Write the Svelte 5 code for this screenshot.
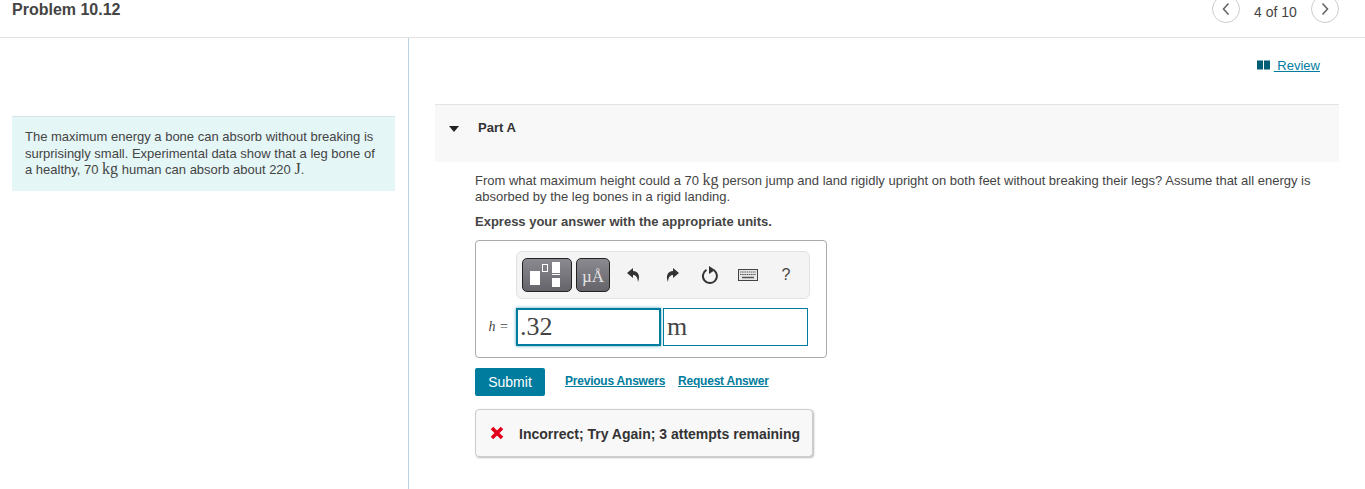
<script>
  let answer = '.32'
  let unit = 'm'
</script>

<div class="page">
  <header class="top">
    <h1>Problem 10.12</h1>
    <nav class="pager">
      <button class="round" aria-label="Previous">
        <svg width="10" height="14" viewBox="0 0 10 14"><path d="M7.5 1.5 2.5 7l5 5.500" fill="none" stroke="#666" stroke-width="1.600"/></svg>
      </button>
      <span class="count">4 of 10</span>
      <button class="round" aria-label="Next">
        <svg width="10" height="14" viewBox="0 0 10 14"><path d="M2.5 1.5 7.5 7l-5 5.500" fill="none" stroke="#666" stroke-width="1.600"/></svg>
      </button>
    </nav>
  </header>

  <div class="main">
    <aside class="side">
      <div class="intro">
        The maximum energy a bone can absorb without breaking is surprisingly small. Experimental data show that a leg bone of a healthy, 70 <span class="math">kg</span> human can absorb about 220 <span class="math">J</span>.
      </div>
    </aside>

    <section class="content">
      <div class="review-row">
        <a href="#review" class="review">
          <svg width="13" height="10" viewBox="0 0 13 10"><path d="M0 .5h6v9H0zM7 .5h6v9H7z" fill="#005f75"/></svg>
          <span>&nbsp;Review</span>
        </a>
      </div>

      <div class="part-head">
        <svg class="caret" width="10" height="6" viewBox="0 0 10 6"><path d="M0 0h10L5 6z" fill="#222"/></svg>
        <strong>Part A</strong>
      </div>

      <div class="part-body">
        <p class="question">From what maximum height could a 70 <span class="math">kg</span> person jump and land rigidly upright on both feet without breaking their legs? Assume that all energy is absorbed by the leg bones in a rigid landing.</p>
        <p class="express">Express your answer with the appropriate units.</p>

        <div class="answer-box">
          <div class="toolbar">
            <button class="tool wide" aria-label="Templates">
              <svg width="48" height="32" viewBox="0 0 48 32">
                <rect x="7" y="12" width="10" height="14" fill="#fff"/>
                <rect x="19.500" y="5.500" width="5" height="7" fill="none" stroke="#fff"/>
                <rect x="29" y="3" width="8" height="11" fill="#fff"/>
                <rect x="29" y="15" width="8" height="1" fill="#fff"/>
                <rect x="29" y="19" width="8" height="9" fill="#fff"/>
              </svg>
            </button>
            <button class="tool units">µÅ</button>
            <button class="icon first" aria-label="Undo">
              <svg width="16" height="16" viewBox="0 0 16 16"><path d="M7 1 1 6l6 5V8c3 0 4.500 2 5 7 2.500-6 .5-10.500-5-11z" fill="#333"/></svg>
            </button>
            <button class="icon" aria-label="Redo">
              <svg width="16" height="16" viewBox="0 0 16 16"><path d="M9 1l6 5-6 5V8c-3 0-4.500 2-5 7C1.500 9 3.500 4.500 9 4z" fill="#333"/></svg>
            </button>
            <button class="icon" aria-label="Reset">
              <svg width="18" height="18" viewBox="0 0 18 18"><path d="M5.500 3.900A7 7 0 1 0 13 4.300" fill="none" stroke="#333" stroke-width="2"/><path d="M8 0v8L14 4z" fill="#333"/></svg>
            </button>
            <button class="icon" aria-label="Keyboard">
              <svg width="20" height="12" viewBox="0 0 20 12">
                <rect x=".5" y=".5" width="19" height="11" fill="#e8e8e8" stroke="#444"/>
                <path d="M2 3h16M2 5.500h16" stroke="#555" stroke-width="1.200" stroke-dasharray="1.500 .7"/>
                <path d="M4 8.500h12" stroke="#555" stroke-width="1.500"/>
              </svg>
            </button>
            <button class="icon help" aria-label="Help">?</button>
          </div>

          <div class="inputs">
            <span class="label"><i>h</i> =</span>
            <input class="field focused" bind:value={answer} aria-label="Value" />
            <input class="field" bind:value={unit} aria-label="Units" />
          </div>
        </div>

        <div class="actions">
          <button class="submit">Submit</button>
          <a href="#prev" class="link">Previous Answers</a>
          <a href="#req" class="link">Request Answer</a>
        </div>

        <div class="feedback">
          <svg width="14" height="14" viewBox="0 0 14 14"><path d="M2 2l10 10M12 2 2 12" stroke="#e2001a" stroke-width="3.600"/></svg>
          <span>Incorrect; Try Again; 3 attempts remaining</span>
        </div>
      </div>
    </section>
  </div>
</div>

<style>
  :global(body) { margin: 0; background: #fff; }

  .page {
    font-family: "Liberation Sans", Arial, sans-serif;
    font-size: 13px; color: #444; height: 489px; overflow: hidden;
  }

  .top {
    height: 37px; border-bottom: 1px solid #e0e0e0;
    display: flex; justify-content: space-between; align-items: flex-start;
  }
  .top h1 { margin: 1px 0 0 12px; font-size: 16px; font-weight: 700; color: #444; line-height: 18px; }

  .pager { display: flex; align-items: flex-start; margin: -5px 26px 0 0; }
  .round {
    width: 28px; height: 28px; border-radius: 50%; border: 1px solid #ccc;
    background: #fff; padding: 0; display: flex; align-items: center; justify-content: center;
  }
  .count { width: 71px; text-align: center; font-size: 14px; line-height: 16px; color: #444; margin-top: 9px; }

  .main { display: flex; height: 451px; }

  .side { width: 408px; border-right: 1px solid #b9d0e0; padding-top: 78px; }
  .intro {
    margin-left: 12px; width: 383px; height: 75px; box-sizing: border-box;
    background: #e5f6f7; border-top: 1px solid #d5e5e8;
    padding: 12px 13px 0; line-height: 16.500px; color: #444;
  }
  .math { font-family: "Liberation Serif", "DejaVu Serif", serif; font-size: 16px; line-height: 0; }

  .content { width: 904px; margin-left: 26px; }

  .review-row { height: 66px; display: flex; justify-content: flex-end; padding: 19px 19px 0 0; box-sizing: border-box; }
  .review { color: #007c9e; text-decoration: underline; display: flex; align-items: center; height: 16px; }
  .review svg { margin-right: 4px; }

  .part-head {
    height: 58px; box-sizing: border-box; background: #f8f8f8; border-top: 1px solid #e3e3e3;
    display: flex; align-items: flex-start; padding-top: 15px;
  }
  .caret { margin: 6px 0 0 14px; }
  .part-head strong { margin-left: 19px; color: #333; line-height: 16px; }

  .part-body { padding-left: 40px; }
  .question { margin: 11px 20px 0 0; line-height: 16px; color: #444; }
  .express { margin: 9px 0 0; font-weight: 700; color: #444; line-height: 16px; }

  .answer-box {
    margin-top: 10px; width: 352px; height: 118px; box-sizing: border-box;
    border: 1px solid #aaa; border-radius: 4px; padding-top: 10px;
  }
  .toolbar {
    width: 294px; height: 48px; box-sizing: border-box; margin-left: 40px;
    background: #f4f4f4; border: 1px solid #e2e2e2; border-radius: 6px;
    display: flex; align-items: center; padding-left: 5px;
  }
  .toolbar button { padding: 0; font-family: inherit; }
  .tool {
    height: 34px; border: 1px solid #222; border-radius: 5px;
    background: linear-gradient(#8a8a90, #64646a); color: #e4e4e4;
    display: flex; align-items: center; justify-content: center;
  }
  .tool.wide { width: 50px; }
  .toolbar .tool.units { width: 34px; margin-left: 4px; font-family: "Liberation Serif", serif; font-size: 17px; padding-top: 3px; }
  .icon {
    width: 38px; height: 30px; border: 0; background: none;
    display: flex; align-items: center; justify-content: center;
  }
  .icon.first { margin-left: 5px; }
  .icon.help { font-size: 16px; color: #444; }

  .inputs { display: flex; align-items: center; margin-top: 9px; }
  .label { width: 40px; text-align: right; padding-right: 8px; font-family: "Liberation Serif", serif; font-size: 14px; word-spacing: 1px; color: #444; box-sizing: border-box; }
  .field {
    width: 145px; height: 38px; box-sizing: border-box; margin-right: 2px;
    border: 1px solid #007c9e; padding: 0 3px; outline: none; background: #fff;
    font-family: "Liberation Serif", serif; font-size: 26px; color: #444; border-radius: 0;
  }
  .field.focused { border-width: 2px; box-shadow: 0 0 3px #4aa3bd; padding-left: 2px; }

  .actions { display: flex; align-items: center; margin-top: 10px; height: 28px; }
  .submit {
    width: 70px; height: 28px; background: #007c9e; color: #fff; border: 0; border-radius: 2px;
    font-family: inherit; font-size: 14px; padding: 0;
  }
  .link { color: #007c9e; font-weight: 700; font-size: 12px; letter-spacing: -0.22px; margin: -2px 0 0 13px; }
  .submit + .link { margin-left: 20px; }

  .feedback {
    margin-top: 13px; width: 338px; height: 48px; box-sizing: border-box;
    background: #f8f8f8; border: 1px solid #ccc; border-radius: 4px; box-shadow: 1px 1px 2px #bbb;
    display: flex; align-items: center; padding-left: 14px; gap: 15px;
    font-weight: 700; font-size: 14px; color: #333;
  }
  .feedback span { margin-top: 2px; }
</style>
